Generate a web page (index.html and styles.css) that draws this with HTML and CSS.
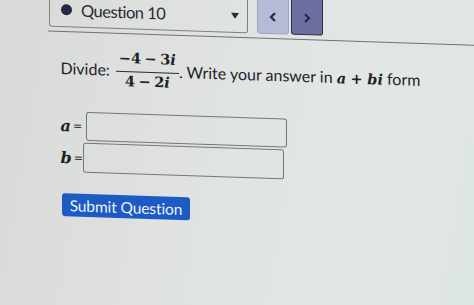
FILE: index.html
```html
<!DOCTYPE html>
<html>
<head>
<meta charset="utf-8">
<link rel="stylesheet" href="styles.css">
</head>
<body>
<div class="page">
  <div class="header">
    <div class="select">
      <span class="dot"></span>
      <span class="qtitle">Question 10</span>
      <span class="caret"></span>
    </div>
    <div class="navbtn prev"><svg width="8" height="10" viewBox="0 0 8 10"><path d="M6 1 L2 5 L6 9" fill="none" stroke="#262a58" stroke-width="2.2"/></svg></div>
    <div class="navbtn next"><svg width="8" height="10" viewBox="0 0 8 10"><path d="M2 1 L6 5 L2 9" fill="none" stroke="#23254a" stroke-width="2"/></svg></div>
  </div>
  <div class="rule"></div>
  <div class="content">
    <div class="prompt">
      <span class="lead">Divide:</span>
      <span class="frac">
        <span class="num">−4<span class="op">−</span>3<i>i</i></span>
        <span class="den">4<span class="op">−</span>2<i>i</i></span>
      </span>
      <span class="tail">. Write your answer in <span class="m"><i>a</i><span class="op">+</span><i>bi</i></span> form</span>
    </div>
    <div class="answers">
      <div class="arow rowa"><span class="lbl"><i>a</i><span class="eq">=</span></span><span class="box"></span></div>
      <div class="arow rowb"><span class="lbl"><i>b</i><span class="eq">=</span></span><span class="box"></span></div>
    </div>
    <div class="submit">Submit Question</div>
  </div>
</div>
</body>
</html>
```

FILE: styles.css
```css
html, body {
  margin: 0;
  padding: 0;
}
body {
  width: 474px;
  height: 305px;
  overflow: hidden;
  background: linear-gradient(100deg, #d7dad7 0%, #dee1df 35%, #e2e7e5 70%, #dee6e4 100%);
  font-family: Lato, "Open Sans", sans-serif;
  color: #232428;
}
.page {
  width: 474px;
  transform: skewY(1.9deg);
  transform-origin: 0 0;
}
.header {
  display: flex;
  margin-top: -20px;
  height: 44.5px;
  padding-left: 48.5px;
}
.select {
  box-sizing: border-box;
  width: 199px;
  height: 100%;
  border: 1px solid #7e8180;
  border-radius: 0 0 3px 3px;
  display: flex;
  align-items: center;
  padding: 20px 0 9.5px 11.5px;
}
.dot {
  width: 11px;
  height: 11px;
  border-radius: 50%;
  background: #262842;
  margin-right: 9px;
}
.qtitle {
  font-size: 16.5px;
  letter-spacing: -0.5px;
  color: #2a2b30;
  flex: 1;
}
.caret {
  width: 0;
  height: 0;
  border-left: 4px solid transparent;
  border-right: 4px solid transparent;
  border-top: 6px solid #2a2b30;
  margin-right: 7.5px;
}
.navbtn {
  box-sizing: border-box;
  width: 32.5px;
  height: 100%;
  display: flex;
  align-items: center;
  justify-content: center;
  padding: 20px 0 9px;
  border-radius: 0 0 3px 3px;
}
.prev {
  margin-left: 9px;
  background: #b6bad4;
  border: 1px solid #a0a4be;
}
.next {
  margin-left: 1.5px;
  background: #6d6e9f;
  border: 1.5px solid #2a2b46;
}
.rule {
  margin: 4.8px 0 0 48px;
  height: 0;
  border-top: 1.5px solid #6f7372;
}
.content {
  padding: 15.3px 0 0 60.5px;
}
.prompt {
  display: flex;
  align-items: center;
}
.lead {
  font-size: 16px;
  line-height: 19px;
}
.frac {
  display: inline-flex;
  flex-direction: column;
  align-items: center;
  margin-left: 6px;
  font-family: "DejaVu Serif", "Liberation Serif", serif;
  font-weight: bold;
  font-size: 14.5px;
  color: #222;
}
.frac i, .m i, .lbl i {
  font-family: "DejaVu Serif", serif;
  font-weight: bold;
  font-style: italic;
}
.op {
  margin: 0 3.5px;
}
.num {
  line-height: 16px;
  padding: 0 3px 5px;
  border-bottom: 1.5px solid #2c2d30;
}
.den {
  line-height: 16px;
  padding-top: 1px;
}
.tail {
  font-size: 16px;
  line-height: 19px;
  margin-top: 2px;
}
.m {
  font-family: "DejaVu Serif", serif;
  font-weight: bold;
  font-size: 14.5px;
  color: #222;
}
.m .op {
  margin: 0 4.5px;
}
.answers {
  margin-top: 24px;
  display: flex;
  flex-direction: column;
  gap: 2px;
}
.arow {
  display: flex;
  align-items: center;
}
.lbl {
  font-size: 16px;
  display: flex;
  align-items: center;
  color: #222;
}
.eq {
  font-size: 11px;
  margin-left: 2px;
  font-family: "DejaVu Sans", sans-serif;
  color: #333;
}
.rowa .lbl { width: 25.5px; }
.rowb .lbl { width: 22.5px; }
.box {
  box-sizing: border-box;
  width: 201px;
  height: 29.5px;
  border: 1.5px solid #737776;
  border-radius: 3px;
}
.rowb .box { height: 30px; width: 200.5px; }
.submit {
  margin-top: 21.4px;
  margin-left: 1.2px;
  width: 128.5px;
  height: 23px;
  box-sizing: border-box;
  background: #1c5bc3;
  color: #eef3fb;
  border-radius: 3px;
  font-size: 15.5px;
  letter-spacing: -0.1px;
  display: flex;
  align-items: center;
  justify-content: center;
  font-family: Lato, "Open Sans", sans-serif;
}
```
